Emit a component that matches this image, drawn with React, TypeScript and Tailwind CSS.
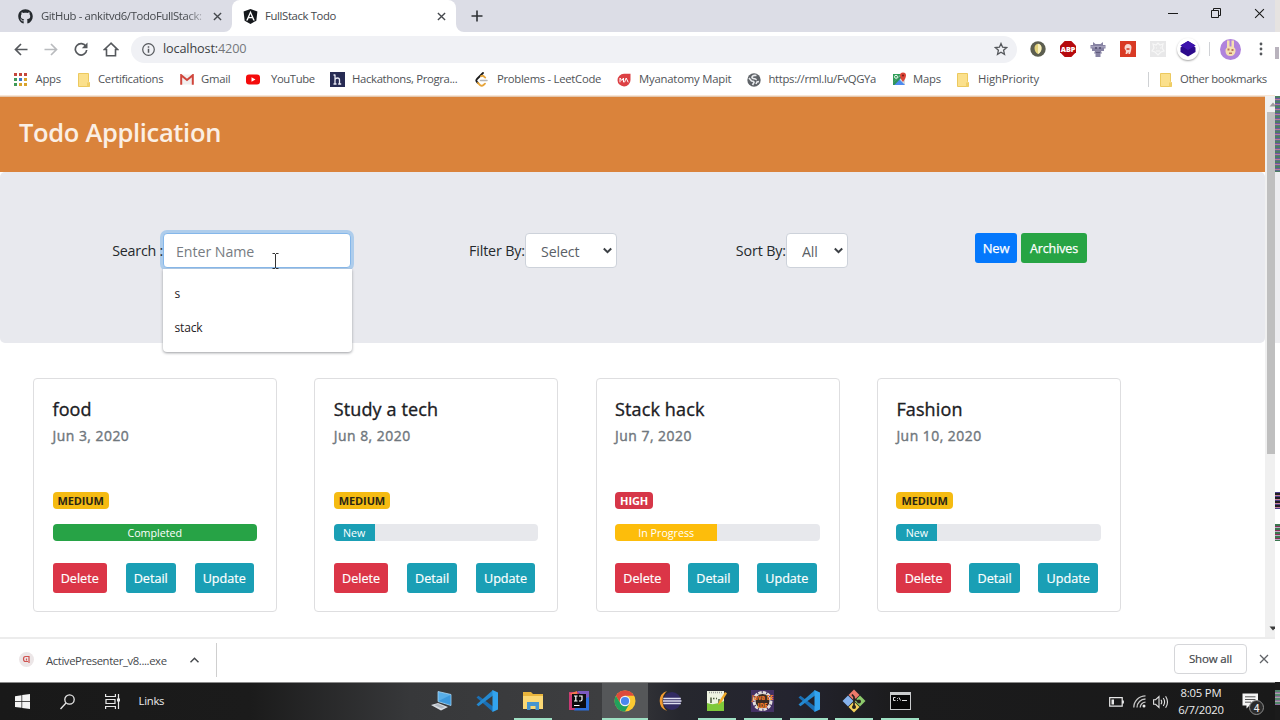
import React, { useState } from "react";
import { FaAngular, FaGithub } from "react-icons/fa";

interface Task {
  name: string;
  date: string;
  priority: "MEDIUM" | "HIGH";
  status: string;
  progress: number;
}

const tasks: Task[] = [
  { name: "food", date: "Jun 3, 2020", priority: "MEDIUM", status: "Completed", progress: 100 },
  { name: "Study a tech", date: "Jun 8, 2020", priority: "MEDIUM", status: "New", progress: 20 },
  { name: "Stack hack", date: "Jun 7, 2020", priority: "HIGH", status: "In Progress", progress: 50 },
  { name: "Fashion", date: "Jun 10, 2020", priority: "MEDIUM", status: "New", progress: 20 },
];

const priorityColors = {
  MEDIUM: "bg-[#f5bb12] text-[#2b2615]",
  HIGH: "bg-[#d63648] text-white",
};

const statusColors: Record<string, string> = {
  Completed: "bg-[#27a346]",
  New: "bg-[#1a9fb5]",
  "In Progress": "bg-[#fdbd0b]",
};

/* ---------- small icons ---------- */

function CloseIcon({ className = "" }: { className?: string }) {
  return (
    <svg viewBox="0 0 10 10" className={className} fill="none" stroke="currentColor">
      <path d="M1 1 9 9M9 1 1 9" />
    </svg>
  );
}

function FolderIcon() {
  return (
    <svg width="12" height="14" viewBox="0 0 12 14">
      <path d="M.5.5h10v8l1 1v4H.5z" fill="#fbe08c" stroke="#ecc95f" />
      <path d="M9 13.500V9.500h2.500v4z" fill="#f0cf68" />
    </svg>
  );
}

function AppsIcon() {
  const colors = ["#c5473c", "#c5473c", "#c5473c", "#3f9a57", "#3d78c9", "#d9a42c", "#3f9a57", "#d9a42c", "#d9a42c"];
  return (
    <svg width="13" height="13" viewBox="0 0 13 13">
      {colors.map((c, i) => (
        <rect key={i} x={(i % 3) * 5} y={Math.floor(i / 3) * 5} width="3" height="3" fill={c} />
      ))}
    </svg>
  );
}

function GmailIcon() {
  return (
    <svg width="14" height="11" viewBox="0 0 14 11">
      <path d="M1 .5h12v10H1z" fill="#f1efef" />
      <path d="M1.200 10.800V1.200L7 6l5.800-4.800v9.600" fill="none" stroke="#d0453b" strokeWidth="2" />
    </svg>
  );
}

function YoutubeIcon() {
  return (
    <svg width="14" height="11" viewBox="0 0 14 11">
      <rect y=".5" width="14" height="10" rx="3" fill="#f40b0b" />
      <path d="M5.500 3.200v4.600L9.500 5.500z" fill="#fff" />
    </svg>
  );
}

function HackerEarthIcon() {
  return (
    <svg width="15" height="15" viewBox="0 0 15 15">
      <rect width="15" height="15" fill="#272b53" />
      <path d="M5 2.500v9.500M5 7.500q.5-1.500 2.500-1.500 2 0 2 2v4M3.500 3H5M3.500 12h3M8.200 12h3" fill="none" stroke="#e8e9f3" strokeWidth="1.300" />
    </svg>
  );
}

function LeetCodeIcon() {
  return (
    <svg width="13" height="15" viewBox="0 0 13 15" fill="none" strokeLinecap="round">
      <path d="M8 1 2 7q-1.400 1.500 0 3l1 1" stroke="#1c1c1c" strokeWidth="1.800" />
      <path d="m3 11 2 2q1.800 1.500 3.500 0L10 11.600M6 4.200q1.500-1 3 .3l1.200 1.100" stroke="#e7a53a" strokeWidth="1.800" />
      <path d="M5.500 8.500H12" stroke="#b5b5b5" strokeWidth="1.500" />
    </svg>
  );
}

function MyanatomyIcon() {
  return (
    <svg width="14" height="14" viewBox="0 0 14 14">
      <path d="M7 .8h6.500V7A6.500 6.300 0 1 1 7 .8z" fill="#dc4044" />
      <path d="M3 9.300V5l1.800 2.500L6.500 5v4.300M7.500 9.300 9.200 5l2 4.300" fill="none" stroke="#fff" />
    </svg>
  );
}

function GlobeIcon() {
  return (
    <svg width="14" height="14" viewBox="0 0 14 14">
      <circle cx="7" cy="7" r="6.700" fill="#5f6368" />
      <path d="M9.500 2.500Q5.500 1.800 5 4.200q0 1.300 2.500 1.600 2 .3 1.500 1.400M2 5l2.500 3q2.500 0 2.500 1.500L5.500 12M12 8.500l-2 .5-1 2" fill="none" stroke="#e8eaed" strokeWidth="1.600" />
    </svg>
  );
}

function MapsIcon() {
  return (
    <svg width="15" height="15" viewBox="0 0 15 15">
      <path d="M1 2h12v11H1z" fill="#d5dbe0" />
      <path d="M1 2h8L1 11z" fill="#2f9d57" />
      <path d="m1 13 6-6 6 6z" fill="#4d8bf0" />
      <path d="M1 10.500 8 4l1.500 1.500L2.500 13H1z" fill="#30945a" />
      <circle cx="4" cy="4.800" r="1.500" fill="none" stroke="#fff" strokeWidth=".9" />
      <path d="M11 10Q8 6 8 3.500a3 3 0 0 1 6 0Q14 6 11 10z" fill="#dc4437" />
      <circle cx="11" cy="3.500" r="1.100" fill="#7d2018" />
    </svg>
  );
}

/* ---------- browser chrome ---------- */

function TabStrip() {
  return (
    <div className="flex h-8 bg-[#dcdde6] text-[11.300px] tracking-[-0.350px] text-[#45484d]">
      <div className="flex w-[232px] items-center pl-[18px]">
        <FaGithub className="h-[15px] w-[15px] shrink-0 text-[#24292e]" />
        <div className="ml-2 w-[168px] shrink-0 whitespace-nowrap [mask-image:linear-gradient(to_right,#000_86%,transparent)]">
          GitHub - ankitvd6/TodoFullStack:
        </div>
        <CloseIcon className="ml-1 h-[9px] w-[9px] stroke-[1.500]" />
      </div>
      <div className="relative flex w-[224px] items-center rounded-t-lg bg-white pl-[10px]">
        <svg className="absolute bottom-0 -left-2 h-2 w-2 fill-white" viewBox="0 0 8 8">
          <path d="M8 0v8H0a8 8 0 0 0 8-8z" />
        </svg>
        <svg className="absolute -right-2 bottom-0 h-2 w-2 fill-white" viewBox="0 0 8 8">
          <path d="M0 0v8h8a8 8 0 0 1-8-8z" />
        </svg>
        <FaAngular className="h-[17px] w-[17px] text-[#15181c]" />
        <span className="ml-[6px] w-[172px]">FullStack Todo</span>
        <CloseIcon className="h-[9px] w-[9px] stroke-[1.500]" />
      </div>
      <svg className="mt-[10px] ml-[15px] h-3 w-3" viewBox="0 0 12 12" stroke="#2e3135" strokeWidth="1.600">
        <path d="M6 .5v11M.5 6h11" />
      </svg>
      <div className="ml-auto flex h-[27px] items-center text-[#1b1b1b]">
        <svg width="10" height="10" viewBox="0 0 10 10" stroke="currentColor">
          <path d="M0 4.500h10" />
        </svg>
        <svg className="ml-[33px]" width="11" height="11" viewBox="0 0 11 11" fill="none" stroke="currentColor">
          <path d="M.5 2.500h7v7h-7zM2.500 2.500v-2h7v7h-2" />
        </svg>
        <CloseIcon className="mr-[10px] ml-[32px] h-[11px] w-[11px]" />
      </div>
    </div>
  );
}

function Toolbar() {
  return (
    <div className="flex h-8 items-center bg-white pt-[2px] text-[#55585c]">
      <svg className="ml-[14px]" width="14" height="13" viewBox="0 0 14 13" fill="none" stroke="currentColor" strokeWidth="1.700">
        <path d="M13.500 6.500H1.500M7 1 1.500 6.500 7 12" />
      </svg>
      <svg className="ml-4 text-[#b9bbbe]" width="14" height="13" viewBox="0 0 14 13" fill="none" stroke="currentColor" strokeWidth="1.700">
        <path d="M.5 6.500h12M7 1l5.500 5.500L7 12" />
      </svg>
      <svg className="ml-4" width="14" height="14" viewBox="0 0 14 14" fill="none" stroke="currentColor" strokeWidth="1.700">
        <path d="M12 4.500A5.700 5.700 0 1 0 12.700 8" />
        <path d="M13.500.5v5.700H7.800z" fill="currentColor" stroke="none" />
      </svg>
      <svg className="ml-[15px]" width="16" height="15" viewBox="0 0 16 15" fill="none" stroke="currentColor" strokeWidth="1.600">
        <path d="M8 1.200 1.500 7.500h2v6.300h9V7.500h2z" />
      </svg>
      <div className="ml-[12px] flex h-[27px] w-[886px] items-center rounded-full bg-[#f0f1f5] pl-[11px]">
        <svg width="13" height="13" viewBox="0 0 13 13" fill="none" stroke="currentColor" strokeWidth="1.200">
          <circle cx="6.500" cy="6.500" r="5.800" />
          <path d="M6.500 5.700v4M6.500 3.200v1.500" strokeWidth="1.500" />
        </svg>
        <span className="ml-2 text-[12.700px] tracking-[-0.150px] text-[#3c3f43]">
          localhost:<span className="text-[#75787c]">4200</span>
        </span>
        <svg className="mr-[9px] ml-auto" width="14" height="14" viewBox="0 0 14 14" fill="none" stroke="currentColor" strokeWidth="1.300">
          <path d="m7 1.500 1.600 3.700 4 .4-3 2.700.9 4L7 10.200l-3.500 2.100.9-4-3-2.700 4-.4z" />
        </svg>
      </div>
      {/* extensions */}
      <svg className="ml-[13px]" width="16" height="16" viewBox="0 0 16 16">
        <circle cx="8" cy="8" r="7.700" fill="#5c5e50" />
        <path d="M8 2.800Q11.500 3.500 11.500 7 11.500 11 8 13 4.500 11 4.500 7 4.500 3.500 8 2.800z" fill="#e3d27b" />
        <path d="M8 2.800Q11.500 3.500 11.500 7 11.500 11 8 13z" fill="#f7efbb" />
      </svg>
      <svg className="ml-[14px]" width="16" height="16" viewBox="0 0 16 16">
        <path d="M4.700 0h6.600L16 4.700v6.600L11.300 16H4.700L0 11.300V4.700z" fill="#b50a0e" />
        <text x="8" y="10.800" textAnchor="middle" fontSize="7.200" fontWeight="800" fill="#fff">ABP</text>
      </svg>
      <svg className="ml-[14px]" width="16" height="16" viewBox="0 0 16 16">
        <path d="M3 1l2.500 2h5L13 1v3h2.500v3.500H14V10h-3l1 2.500h-1.500V16h-5v-3.500H4L5 10H2V7.500H.5V4H3z" fill="#8783a3" />
        <path d="M1 5h14v1.500H1z" fill="#a6a2bd" />
        <path d="M5 6h2v2H5zM9 6h2v2H9zM6 11h4v1H6z" fill="#5f5b7c" />
      </svg>
      <svg className="ml-[14px]" width="16" height="16" viewBox="0 0 16 16">
        <rect width="16" height="16" fill="#d93a24" />
        <path d="M8 3q3.500 0 3.500 3.500L11 10l-1 3H8.500v-2L7 13H5.500L6 10 4.500 7.500Q4.500 3 8 3z" fill="#f8d9d2" />
        <path d="M6.500 7h3v2h-3z" fill="#d9604e" />
      </svg>
      <svg className="ml-[14px]" width="16" height="16" viewBox="0 0 16 16">
        <rect width="16" height="16" fill="#e8e8e9" />
        <path d="M3 3l3 1 2-2 2 2 3-1-1 4 2 3-3 1-3 3-3-3-3-1 2-3zM6 7h1m3 0h1M6 10h4" fill="none" stroke="#f7f7f7" strokeWidth="1.200" />
      </svg>
      <div className="ml-[11px] flex h-[22px] w-[22px] items-center justify-center rounded-full bg-white shadow-[0_1px_2px_#a5a5a5]">
        <svg width="16" height="16" viewBox="0 0 16 16">
          <path d="M8 0l7.500 4.500-1.500 1 1.500 1V11L8 15.500.5 11V6.500l1.500-1-1.500-1z" fill="#2c0a8c" />
          <path d="M8 0l7.500 4.500L8 9 .5 4.500z" fill="#3c12ad" />
        </svg>
      </div>
      <div className="ml-[10px] h-[14px] w-px bg-[#d0d2d6]" />
      <svg className="ml-[10px]" width="21" height="21" viewBox="0 0 21 21">
        <circle cx="10.500" cy="10.500" r="10.500" fill="#b083dc" />
        <path d="M7 1.500h2.500v6h2v-6H14v6.800q2 1.500 1.500 4Q15 17 10.500 17T5.500 12.500q-.5-2.500 1.500-4z" fill="#f5dfb0" />
        <path d="M7.500 9.500h2v2h-2zM11.500 10h2v2h-2zM9 13.500h3V15H9z" fill="#b9765a" />
      </svg>
      <svg className="ml-[18px]" width="4" height="14" viewBox="0 0 4 14" fill="currentColor">
        <circle cx="2" cy="2" r="1.400" />
        <circle cx="2" cy="7" r="1.400" />
        <circle cx="2" cy="12" r="1.400" />
      </svg>
    </div>
  );
}

const bookmarks = [
  { label: "Apps", icon: <AppsIcon />, box: "w-[64px]", iconBox: "w-[21.500px]", spacing: "tracking-[-0.250px]" },
  { label: "Certifications", icon: <FolderIcon />, box: "w-[102px]", iconBox: "w-[20px]", spacing: "tracking-[-0.290px]" },
  { label: "Gmail", icon: <GmailIcon />, box: "w-[66px]", iconBox: "w-[21px]", spacing: "tracking-[-0.250px]" },
  { label: "YouTube", icon: <YoutubeIcon />, box: "w-[84px]", iconBox: "w-[25px]", spacing: "tracking-[-0.400px]" },
  { label: "Hackathons, Progra...", icon: <HackerEarthIcon />, box: "w-[145px]", iconBox: "w-[22px]", spacing: "tracking-[-0.330px]" },
  { label: "Problems - LeetCode", icon: <LeetCodeIcon />, box: "w-[142px]", iconBox: "w-[22px]", spacing: "tracking-[-0.280px]" },
  { label: "Myanatomy Mapit", icon: <MyanatomyIcon />, box: "w-[130px]", iconBox: "w-[22px]", spacing: "tracking-[-0.200px]" },
  { label: "https://rml.lu/FvQGYa", icon: <GlobeIcon />, box: "w-[145px]", iconBox: "w-[21.500px]", spacing: "tracking-[-0.330px]" },
  { label: "Maps", icon: <MapsIcon />, box: "w-[65px]", iconBox: "w-[21px]", spacing: "tracking-[-0.200px]" },
  { label: "HighPriority", icon: <FolderIcon />, box: "w-[191px]", iconBox: "w-[21px]", spacing: "tracking-[-0.120px]" },
];

function BookmarksBar() {
  return (
    <div className="flex h-8 items-center border-b border-[#f8e6d6] bg-white pl-[14px] text-[11.300px] whitespace-nowrap text-[#505357]">
      {bookmarks.map((b) => (
        <div key={b.label} className={`flex shrink-0 items-center ${b.box} ${b.spacing}`}>
          <span className={`shrink-0 ${b.iconBox}`}>{b.icon}</span>
          <span>{b.label}</span>
        </div>
      ))}
      <div className="h-[15px] w-px bg-[#cfd1d4]" />
      <span className="ml-[11px] w-5 shrink-0">
        <FolderIcon />
      </span>
      <span className="tracking-[-0.400px]">Other bookmarks</span>
    </div>
  );
}

/* ---------- todo page ---------- */

function SelectBox({ value, className }: { value: string; className: string }) {
  return (
    <div className={`relative ${className}`}>
      <select
        className="h-[35px] w-full appearance-none rounded border border-[#cdd2da] bg-white pt-[2px] pl-[15px] text-[14.200px] text-[#5a6067] outline-none"
        defaultValue={value}
      >
        <option>{value}</option>
      </select>
      <svg className="absolute top-[14px] right-[5px] h-2 w-[9px]" viewBox="0 0 9 8" fill="none" stroke="#3c4045" strokeWidth="2">
        <path d="M.8 1.500 4.500 5.200 8.200 1.500" />
      </svg>
    </div>
  );
}

function FilterBar() {
  const [search, setSearch] = useState("");
  return (
    <div className="flex h-[171px] items-start rounded-[5px] bg-[#e8e9ee] pt-[61px] text-[14.300px] tracking-[-0.140px] text-[#25292d]">
      <label className="relative z-10 w-[163px] pt-[8px] text-right leading-5 tracking-[-0.250px]">Search :</label>
      <div className="relative w-[188px]">
        <input
          className="h-[35px] w-full rounded border border-[#85b7ea] bg-white pt-[2px] pl-[12px] text-[14.200px] tracking-[-0.050px] text-[#495057] shadow-[0_0_0_3px_#aecdec] outline-none placeholder:text-[#777c82]"
          placeholder="Enter Name"
          value={search}
          onChange={(e) => setSearch(e.target.value)}
        />
        <div className="absolute top-[36px] left-0 h-[83px] w-[189px] rounded-b bg-white pt-2 pl-[11.500px] text-[12px] leading-[34px] text-[#1f2124] shadow-[0_1px_3px_#9a9ba0]">
          <div>s</div>
          <div>stack</div>
        </div>
        <svg className="absolute top-[20px] left-[109px]" width="7" height="16" viewBox="0 0 7 16" fill="none" stroke="#333">
          <path d="M.5.5h2.500M4 .5h2.500M3.500 1v14M.5 15.500h2.500M4 15.500h2.500" />
        </svg>
      </div>
      <label className="w-[174px] pt-[8px] text-right leading-5">Filter By:</label>
      <SelectBox value="Select" className="w-[92px]" />
      <label className="w-[169px] pt-[8px] text-right leading-5">Sort By:</label>
      <SelectBox value="All" className="w-[62px]" />
      <button className="ml-[127px] h-[30px] w-[42px] rounded-[3px] bg-[#0478fc] pt-px text-[13px] text-white [-webkit-text-stroke:0.250px_white]">
        New
      </button>
      <button className="ml-1 h-[30px] w-[66px] rounded-[3px] bg-[#27a444] pt-[2px] text-[12.500px] text-white [-webkit-text-stroke:0.250px_white]">
        Archives
      </button>
    </div>
  );
}

function TaskCard({ task }: { task: Task }) {
  return (
    <div className="h-[234px] w-[244px] shrink-0 rounded border border-[#dedee0] bg-white pt-[18px] pl-[18.500px]">
      <h5 className="text-[18px] leading-[24px] tracking-[0.120px] text-[#1c2024] [-webkit-text-stroke:0.350px_#1c2024]">
        {task.name}
      </h5>
      <h6 className="mt-[5px] text-[13.900px] leading-[20px] tracking-[0.500px] text-[#70777d] [-webkit-text-stroke:0.400px_#70777d]">
        {task.date}
      </h6>
      <div className="mt-[46px] flex">
        <span
          className={`flex h-[17px] items-center rounded px-[5px] text-[11px] leading-none font-bold tracking-[-0.120px] ${priorityColors[task.priority]}`}
        >
          {task.priority}
        </span>
      </div>
      <div className="mt-[15px] h-[17px] w-[204.500px] overflow-hidden rounded bg-[#e7e8ec]">
        <div
          className={`h-full text-center text-[10.700px] leading-[18px] text-white ${statusColors[task.status]}`}
          style={{ width: `${task.progress}%` }}
        >
          {task.status}
        </div>
      </div>
      <div className="mt-[22px] flex h-[30px] text-[12.600px] text-white [-webkit-text-stroke:0.200px_white]">
        <button className="h-[30px] w-[54.500px] rounded-[3px] bg-[#db3547] pt-[2px]">Delete</button>
        <button className="ml-[18.500px] h-[30px] w-[50.500px] rounded-[3px] bg-[#1a9fb5] pt-[2px]">Detail</button>
        <button className="ml-[18.500px] h-[30px] w-[59.500px] rounded-[3px] bg-[#1a9fb5] pt-[2px]">Update</button>
      </div>
    </div>
  );
}

function TodoPage() {
  return (
    <div className="flex h-[541px]">
      <div className="w-[1265px] bg-white">
        <header className="h-[76px] border-t border-[#e3c7ae] bg-[#da833b] pt-[17px] pl-[19px] text-[25.500px] leading-9 font-semibold tracking-[-0.330px] text-[#fbefe4]">
          Todo Application
        </header>
        <FilterBar />
        <main className="flex gap-[37.300px] pt-[35px] pl-[33px]">
          {tasks.map((task) => (
            <TaskCard key={task.name} task={task} />
          ))}
        </main>
      </div>
      <div className="flex w-[10px] flex-col bg-[#f0f0f0] pl-[2px]">
        <svg width="8" height="16" viewBox="0 0 8 16">
          <path d="m2.500 10.500 3.500-4 3.500 4z" fill="#9b9b9b" />
        </svg>
        <div className="h-[342px] bg-[#bfbfbf]" />
        <svg className="mt-auto" width="8" height="18" viewBox="0 0 8 18">
          <path d="m2.500 7.500 3.500 4 3.500-4z" fill="#3c3c3c" />
        </svg>
      </div>
    </div>
  );
}

function DownloadBar() {
  return (
    <div className="flex h-[45px] w-full items-center border-t-2 border-[#ececec] bg-white pb-[2px] text-[#45484c]">
      <svg className="ml-[19px]" width="15" height="15" viewBox="0 0 15 15" fill="none">
        <circle cx="7.500" cy="7.500" r="7.500" fill="#ece6e7" />
        <path d="M9 9.500H6.500q-2 0-2-2.500t2-2.500H10V11M7.500 6.500v2" stroke="#d0524f" strokeWidth="1.200" />
      </svg>
      <span className="ml-3 w-[144px] pt-[3px] text-[11.300px] tracking-[-0.390px]">ActivePresenter_v8....exe</span>
      <svg width="9" height="6" viewBox="0 0 9 6" fill="none" stroke="currentColor" strokeWidth="1.400">
        <path d="M.5 5.300 4.500 1.200l4 4.100" />
      </svg>
      <div className="ml-[17px] h-[34px] w-px bg-[#cfcfcf]" />
      <button className="mb-px ml-auto h-[30px] w-[73px] rounded border border-[#d5d6d9] text-[11.500px] tracking-[-0.150px] [-webkit-text-stroke:0.200px_#45484c]">
        Show all
      </button>
      <CloseIcon className="mr-[6px] mb-px ml-[12px] h-[10px] w-[10px] stroke-[1.300] text-[#606367]" />
    </div>
  );
}

/* ---------- windows taskbar ---------- */

function VsCodeIcon() {
  return (
    <svg width="24" height="24" viewBox="0 0 24 24">
      <path d="m1.500 8.500 2-1.800L18 17.500V23z" fill="#1a6fb4" />
      <path d="m1.500 15.500 2 1.800L18 6.500V1z" fill="#2489d0" />
      <path d="M17.500 1 23 3.500v17L17.500 23z" fill="#32a3ee" />
    </svg>
  );
}

function ChromeIcon() {
  return (
    <svg width="22" height="22" viewBox="0 0 22 22">
      <circle cx="11" cy="11" r="10.500" fill="#fbc931" />
      <path d="M1.900 5.750A10.500 10.500 0 0 1 20.100 5.750H11L6.450 13.600z" fill="#dd4b3c" />
      <path d="M1.900 5.750 6.450 13.600 11 16.200l0 5.300A10.500 10.500 0 0 1 1.900 5.750z" fill="#22a05c" />
      <path d="m11 21.500 4.600-7.900-4.600 2.500-3-1z" fill="#22a05c" />
      <circle cx="11" cy="11" r="5.200" fill="#f3f4f6" />
      <circle cx="11" cy="11" r="4.100" fill="#4a86ee" />
    </svg>
  );
}

const taskbarApps = [
  {
    name: "computer",
    open: false,
    icon: (
      <svg width="23" height="22" viewBox="0 0 23 22">
        <path d="M8 1.500 21 4.500v11L8 11.500z" fill="#58aee8" stroke="#a9d5f2" strokeWidth=".8" />
        <path d="m8.500 11 12-6v9.800z" fill="#3c98dc" />
        <path d="m1 15 7-2 10 4-7 3.500z" fill="#d8dde2" />
        <path d="m4 15 4-1 7 3-3.500 1.500z" fill="#aeb6bf" />
      </svg>
    ),
  },
  { name: "vscode", open: false, icon: <VsCodeIcon /> },
  {
    name: "explorer",
    open: true,
    icon: (
      <svg width="22" height="20" viewBox="0 0 22 20">
        <path d="M1 1h8l2 2h10v15H1z" fill="#e9b53c" />
        <path d="M1 5h20v13H1z" fill="#fbd874" />
        <path d="M5 19v-8h12v8h-3.500v-4h-5v4z" fill="#4795cf" />
      </svg>
    ),
  },
  {
    name: "intellij",
    open: false,
    icon: (
      <svg width="20" height="20" viewBox="0 0 20 20">
        <path d="M0 1h10l-3 18H0z" fill="#c93a75" />
        <path d="M8 0h12v12z" fill="#7b59c0" />
        <path d="M20 6v13.500H5L10 10z" fill="#2c6fdc" />
        <path d="M0 3 8 0v5z" fill="#f2764b" />
        <rect x="3" y="3" width="14" height="14" fill="#0c0c0e" />
        <path d="M5 5h3.500M6.800 5v5M5 10h3.500M10 5h3v3.500q0 1.500-1.500 1.500H10M5 14.500h5.500" fill="none" stroke="#fff" strokeWidth="1.200" />
      </svg>
    ),
  },
  { name: "chrome", open: true, active: true, icon: <ChromeIcon /> },
  {
    name: "eclipse",
    open: false,
    icon: (
      <svg width="23" height="22" viewBox="0 0 23 22">
        <path d="M8 1A10.500 10.500 0 0 0 8 21Q3.500 17 3.500 11T8 1z" fill="#f39a30" />
        <circle cx="13" cy="11" r="9" fill="#322b62" />
        <path d="M4.300 8.500h17.500M4 11h18.500M4.300 13.500h17.500" stroke="#dfdff0" strokeWidth="1.400" />
      </svg>
    ),
  },
  {
    name: "notepad",
    open: true,
    icon: (
      <svg width="21" height="22" viewBox="0 0 21 22">
        <path d="M1 1h17v20H1z" fill="#eef3e2" />
        <path d="M1 13q7 3 17-2v10H1z" fill="#7fc93a" />
        <path d="M3 2.500h13" stroke="#9b9b9b" strokeWidth="1.500" strokeDasharray="1 1" />
        <path d="M5 13V7.500M7 8.500h1.500M10 8.500h1M13 13V9" stroke="#4a5a3a" strokeWidth="1.500" />
        <path d="m12 15 1-3.500L19 2l2 1.200-6 9.800z" fill="#efa929" />
      </svg>
    ),
  },
  {
    name: "eclipse-jee",
    open: true,
    icon: (
      <svg width="23" height="22" viewBox="0 0 23 22">
        <rect width="23" height="22" fill="#433163" />
        <circle cx="11.500" cy="11" r="8.500" fill="none" stroke="#e3dfdd" strokeWidth="3" strokeDasharray="3.400 1.050" />
        <circle cx="11.500" cy="11" r="7.500" fill="#3a2b22" stroke="#e3dfdd" />
        <text x="11.500" y="10" textAnchor="middle" fontSize="6" fontWeight="800" fill="#e8762a">Java EE</text>
        <text x="11.500" y="18.200" textAnchor="middle" fontSize="6" fontWeight="800" fill="#ee7c28">IDE</text>
      </svg>
    ),
  },
  { name: "vscode-2", open: true, icon: <VsCodeIcon /> },
  {
    name: "git",
    open: true,
    icon: (
      <svg width="24" height="24" viewBox="0 0 24 24">
        <path d="m12 .5 5.500 5.500-5.500 5.500L6.500 6z" fill="#ec7a6b" />
        <path d="m6 6.500 5.500 5.500L6 17.500.5 12z" fill="#86b2ec" />
        <path d="m18 6.500 5.500 5.500-5.500 5.500-5.500-5.500z" fill="#8dc96c" />
        <path d="m12 12.500 5.500 5.500-5.500 5.500L6.500 18z" fill="#f2d05c" />
        <path d="M10 5.500 12 8v10M12.500 10l4.500 3" fill="none" stroke="#26221f" strokeWidth="1.700" />
        <circle cx="12" cy="18" r="2" fill="#26221f" />
        <circle cx="17" cy="12.500" r="2" fill="#26221f" />
      </svg>
    ),
  },
  {
    name: "cmd",
    open: true,
    icon: (
      <svg width="21" height="18" viewBox="0 0 21 18">
        <rect width="21" height="18" fill="#c9cbcc" />
        <rect x="1" y="3" width="19" height="14" fill="#060606" />
        <path d="M5.500 5.500H3.500v3h2M7.500 6v.8M7.500 8v.8M9 5.500l1.500 3M12 8.500h5" fill="none" stroke="#dcdcdc" />
      </svg>
    ),
  },
];

function Taskbar() {
  return (
    <div className="flex h-[38px] w-full items-stretch border-t border-[#8a8a8a] bg-[linear-gradient(to_right,#191919_0,#1b1b1b_250px,#37383a_410px,#3d3e40_600px,#26272e_680px,#24242f_790px,#1b1b1c_900px,#191919_100%)] text-[#ececec]">
      <div className="flex w-[418.500px] items-center">
        <svg className="ml-[15px]" width="15" height="15" viewBox="0 0 15 15" fill="#f4f4f4">
          <path d="M0 2.200 6.500 1.200V7H0zM7.200 1.100 15 0v7H7.200zM0 7.800h6.500v6L0 12.900zM7.200 7.800H15V15l-7.800-1.100z" />
        </svg>
        <svg className="ml-[30px]" width="15" height="16" viewBox="0 0 15 16" fill="none" stroke="#e8e8e8" strokeWidth="1.300">
          <circle cx="9.500" cy="5.500" r="4.700" />
          <path d="M6 9 .5 15" />
        </svg>
        <svg className="ml-[30px]" width="16" height="15" viewBox="0 0 16 15" fill="none" stroke="#e8e8e8" strokeWidth="1.200">
          <path d="M.6 0v2.500h9.800V0M1 5.500h9v4H1zM.6 15v-2.500h9.800V15M13.500 0v15" />
          <path d="M12 4.500h3v3h-3z" fill="#e8e8e8" stroke="none" />
        </svg>
        <span className="ml-[17.500px] text-[11.300px] tracking-[-0.250px]">Links</span>
      </div>
      {taskbarApps.map((app) => (
        <div
          key={app.name}
          className={`flex w-[45.900px] flex-col items-center px-[4px] ${app.active ? "bg-[#555759]" : ""}`}
        >
          <div className="flex h-[35px] items-center">{app.icon}</div>
          {app.open && (
            <div className={`h-[2px] bg-[#9fe0c4] ${app.active ? "w-[46px]" : "w-[38px]"}`} />
          )}
        </div>
      ))}
      <div className="ml-auto flex items-center">
        <svg width="15" height="10" viewBox="0 0 15 10" fill="none" stroke="#e8e8e8">
          <path d="M.7.7h12.500v8.500H.7zM14.300 3.500v3" strokeWidth="1.200" />
          <path d="M2.500 2.500H5v5H2.500z" fill="#e8e8e8" stroke="none" />
        </svg>
        <svg className="ml-[9px]" width="13" height="13" viewBox="0 0 13 13" fill="none" stroke="#c5c5c5" strokeWidth="1.300">
          <path d="M.8 12.500A11.700 11.700 0 0 1 12.500.8M4 12.500A8.500 8.500 0 0 1 12.500 4M7.200 12.500a5.300 5.300 0 0 1 5.300-5.300" />
          <circle cx="11" cy="11" r="1.500" fill="#e8e8e8" stroke="none" />
        </svg>
        <svg className="ml-[7px]" width="16" height="14" viewBox="0 0 16 14" fill="none" stroke="#e2e2e2" strokeWidth="1.100">
          <path d="M.6 4.700h2L6 1.500v11L2.600 9.300h-2zM8 4.800q1.500 2.200 0 4.400M10.300 3q2.600 4 0 8M12.600 1.200q3.800 5.800 0 11.600" />
        </svg>
        <div className="ml-[9px] w-[46px] text-center text-[11.300px] leading-[16.500px] tracking-[-0.200px] whitespace-nowrap">
          <div>8:05 PM</div>
          <div>6/7/2020</div>
        </div>
        <div className="relative mr-[16px] ml-[18px] h-[17px] w-[17px]">
          <svg width="17" height="16" viewBox="0 0 17 16">
            <path d="M.5.500h15.500v12H7.500L4.500 15.500v-3h-4z" fill="#f4f4f4" />
            <path d="M3 3.800h10.500M3 6.500h10.500M3 9.200h6" stroke="#555" />
          </svg>
          <span className="absolute top-[7px] left-[7px] flex h-[15px] w-[15px] items-center justify-center rounded-full border border-[#8c8c8c] bg-[#2b2b2b] text-[10px] leading-none font-semibold">
            4
          </span>
        </div>
      </div>
    </div>
  );
}

// sliver of the window that sits behind the browser
function BackgroundEdge() {
  return (
    <div className="flex h-[720px] w-[5px] flex-col bg-white">
      <div className="h-8 bg-[#e6e3e1]" />
      <div className="h-16 pt-[15px]">
        <div className="h-3 w-1 bg-[#b9b3bd]" />
      </div>
      <div className="h-[76px] bg-[repeating-linear-gradient(to_bottom,#4c7f63_0_2px,#6d58a0_2px_3px,#b87e92_3px_4px,#5d6a8a_4px_5px)]" />
      <div className="h-[171px] bg-[#ededf0]" />
      <div className="mt-[149px] h-[17px] bg-[repeating-linear-gradient(to_bottom,#4b3f8c_0_1px,#202020_1px_3px,#c77f9c_3px_4px)]" />
      <div className="mt-[15px] h-[17px] bg-[repeating-linear-gradient(to_bottom,#3c7750_0_2px,#8b2f5c_2px_3px,#b9a9c4_3px_4px)]" />
      <div className="mt-auto h-[38px] bg-[#1b1b1b] pt-2">
        <div className="h-[15px] bg-[repeating-linear-gradient(to_bottom,#54866d_0_2px,#8d6d9c_2px_3px,#a4a4a4_3px_4px)]" />
      </div>
    </div>
  );
}

export default function App() {
  return (
    <div className="flex h-[720px] w-[1280px] overflow-hidden bg-white font-['Open_Sans','Noto_Sans',sans-serif]">
      <div className="flex w-[1275px] shrink-0 flex-col">
        <TabStrip />
        <Toolbar />
        <BookmarksBar />
        <TodoPage />
        <DownloadBar />
        <Taskbar />
      </div>
      <BackgroundEdge />
    </div>
  );
}
